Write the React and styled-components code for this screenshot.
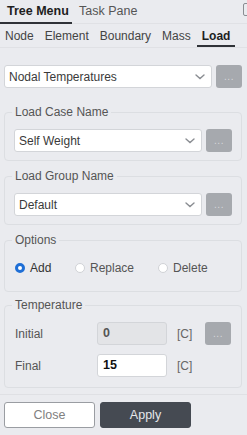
import React from 'react';
import styled, { createGlobalStyle } from 'styled-components';

const Global = createGlobalStyle`
  html, body {
    margin: 0;
    padding: 0;
    background: #eaebef;
  }
  * {
    box-sizing: border-box;
  }
`;

const Panel = styled.div`
  width: 247px;
  height: 435px;
  background: #eaebef;
  font-family: 'Liberation Sans', Arial, sans-serif;
  font-size: 12px;
  color: #444;
  overflow: hidden;
  display: flex;
  flex-direction: column;
`;

const TopTabs = styled.div`
  display: flex;
  align-items: stretch;
  height: 24px;
  position: relative;
  border-bottom: 1px solid #e0e1e5;
`;

const TopTab = styled.div`
  padding: 4px 7px 0;
  width: ${p => p.w}px;
  white-space: nowrap;
  font-weight: ${p => (p.active ? 700 : 400)};
  color: ${p => (p.active ? '#1e1e1e' : '#555')};
  font-size: 12.5px;
  border-bottom: 2px solid ${p => (p.active ? '#2f3237' : 'transparent')};
  margin-bottom: -1px;
`;

const CornerIcon = styled.div`
  position: absolute;
  right: -6px;
  top: 3px;
  width: 10px;
  height: 13px;
  border: 1.5px solid #8a8d92;
  border-radius: 2px;
`;

const SubTabs = styled.div`
  display: flex;
  height: 24px;
  border-bottom: 1px solid #e0e1e5;
`;

const SubTab = styled.div`
  padding: 5px 5px 0;
  margin-right: 1px;
  white-space: nowrap;
  font-weight: ${p => (p.active ? 700 : 400)};
  color: ${p => (p.active ? '#1e1e1e' : '#444')};
  font-size: 12px;
  border-bottom: 2px solid ${p => (p.active ? '#2f3237' : 'transparent')};
`;

const Body = styled.div`
  padding: 17px 5px 0 4px;
  display: flex;
  flex-direction: column;
`;

const Row = styled.div`
  display: flex;
  align-items: center;
  gap: 4px;
`;

const Select = styled.div`
  flex: 1;
  height: 23px;
  background: #fff;
  border: 1px solid #d3d5d9;
  border-radius: 3px;
  display: flex;
  align-items: center;
  justify-content: space-between;
  padding: 0 6px 0 4px;
  color: #3a3a3a;
`;

const DotsButton = styled.div`
  width: 26px;
  height: 23px;
  border-radius: 3px;
  background: #a6a9ae;
  color: #d6d8db;
  font-size: 10px;
  display: flex;
  align-items: flex-end;
  justify-content: center;
  padding-bottom: 6px;
  letter-spacing: 0.5px;
`;

const Group = styled.fieldset`
  margin: ${p => p.top}px 0 0;
  padding: 10px 9px ${p => p.pb}px 9px;
  border: 1px solid #dcdee2;
  border-radius: 4px;
  min-width: 0;
`;

const Legend = styled.legend`
  padding: 0 3px;
  margin-left: -2px;
  color: #555;
  font-size: 12px;
`;

const RadioRow = styled.div`
  display: flex;
  align-items: center;
  padding: 4px 0 3px 1px;
`;

const Radio = styled.label`
  display: flex;
  align-items: center;
  gap: 5px;
  width: ${p => p.w}px;
  color: ${p => (p.checked ? '#333' : '#555')};
`;

const RadioDot = styled.span`
  width: 10px;
  height: 10px;
  border-radius: 50%;
  background: #fff;
  border: ${p => (p.checked ? '3px solid #1f6fd6' : '1px solid #d0d2d6')};
`;

const FieldRow = styled.div`
  display: flex;
  align-items: center;
  height: 23px;
  margin-top: ${p => p.mt}px;
`;

const FieldLabel = styled.div`
  width: 83px;
  padding-left: 1px;
  color: #555;
`;

const Input = styled.div`
  width: 70px;
  height: 23px;
  border-radius: 3px;
  border: 1px solid #d3d5d9;
  background: ${p => (p.disabled ? '#e3e4e7' : '#fff')};
  color: ${p => (p.disabled ? '#555' : '#111')};
  font-weight: 700;
  font-size: 12.5px;
  padding: 3px 0 0 5px;
`;

const Unit = styled.div`
  width: 38px;
  padding-left: 10px;
  color: #666;
`;

const Footer = styled.div`
  margin-top: 6px;
  border-top: 1px solid #dfe0e4;
  padding: 7px 4px 0;
  display: flex;
  gap: 5px;
`;

const Button = styled.div`
  width: 91px;
  height: 26px;
  border-radius: 3px;
  display: flex;
  align-items: center;
  justify-content: center;
  font-size: 12.5px;
  background: ${p => (p.primary ? '#454a52' : '#fff')};
  color: ${p => (p.primary ? '#e6e7ea' : '#808080')};
  border: 1px solid ${p => (p.primary ? '#454a52' : '#9a9da2')};
`;

const Chevron = () => (
  <svg width="10" height="6" viewBox="0 0 10 6">
    <path d="M1 1l4 3.5L9 1" fill="none" stroke="#8a8d92" strokeWidth="1.4" strokeLinecap="round" />
  </svg>
);

const Dropdown = ({ value }) => (
  <Row>
    <Select>
      <span>{value}</span>
      <Chevron />
    </Select>
    <DotsButton>...</DotsButton>
  </Row>
);

export default function App() {
  return (
    <>
      <Global />
      <Panel>
        <TopTabs>
          <TopTab active w={72}>Tree Menu</TopTab>
          <TopTab w={80}>Task Pane</TopTab>
          <CornerIcon />
        </TopTabs>
        <SubTabs>
          <SubTab>Node</SubTab>
          <SubTab>Element</SubTab>
          <SubTab>Boundary</SubTab>
          <SubTab>Mass</SubTab>
          <SubTab active>Load</SubTab>
        </SubTabs>
        <Body>
          <Dropdown value="Nodal Temperatures" />
          <Group top={17} pb={8}>
            <Legend>Load Case Name</Legend>
            <Dropdown value="Self Weight" />
          </Group>
          <Group top={8} pb={8}>
            <Legend>Load Group Name</Legend>
            <Dropdown value="Default" />
          </Group>
          <Group top={8} pb={13}>
            <Legend>Options</Legend>
            <RadioRow>
              <Radio checked w={60}><RadioDot checked />Add</Radio>
              <Radio w={83}><RadioDot />Replace</Radio>
              <Radio><RadioDot />Delete</Radio>
            </RadioRow>
          </Group>
          <Group top={6} pb={10}>
            <Legend>Temperature</Legend>
            <FieldRow mt={0}>
              <FieldLabel>Initial</FieldLabel>
              <Input disabled>0</Input>
              <Unit>[C]</Unit>
              <DotsButton>...</DotsButton>
            </FieldRow>
            <FieldRow mt={9}>
              <FieldLabel>Final</FieldLabel>
              <Input>15</Input>
              <Unit>[C]</Unit>
            </FieldRow>
          </Group>
        </Body>
        <Footer>
          <Button>Close</Button>
          <Button primary>Apply</Button>
        </Footer>
      </Panel>
    </>
  );
}
